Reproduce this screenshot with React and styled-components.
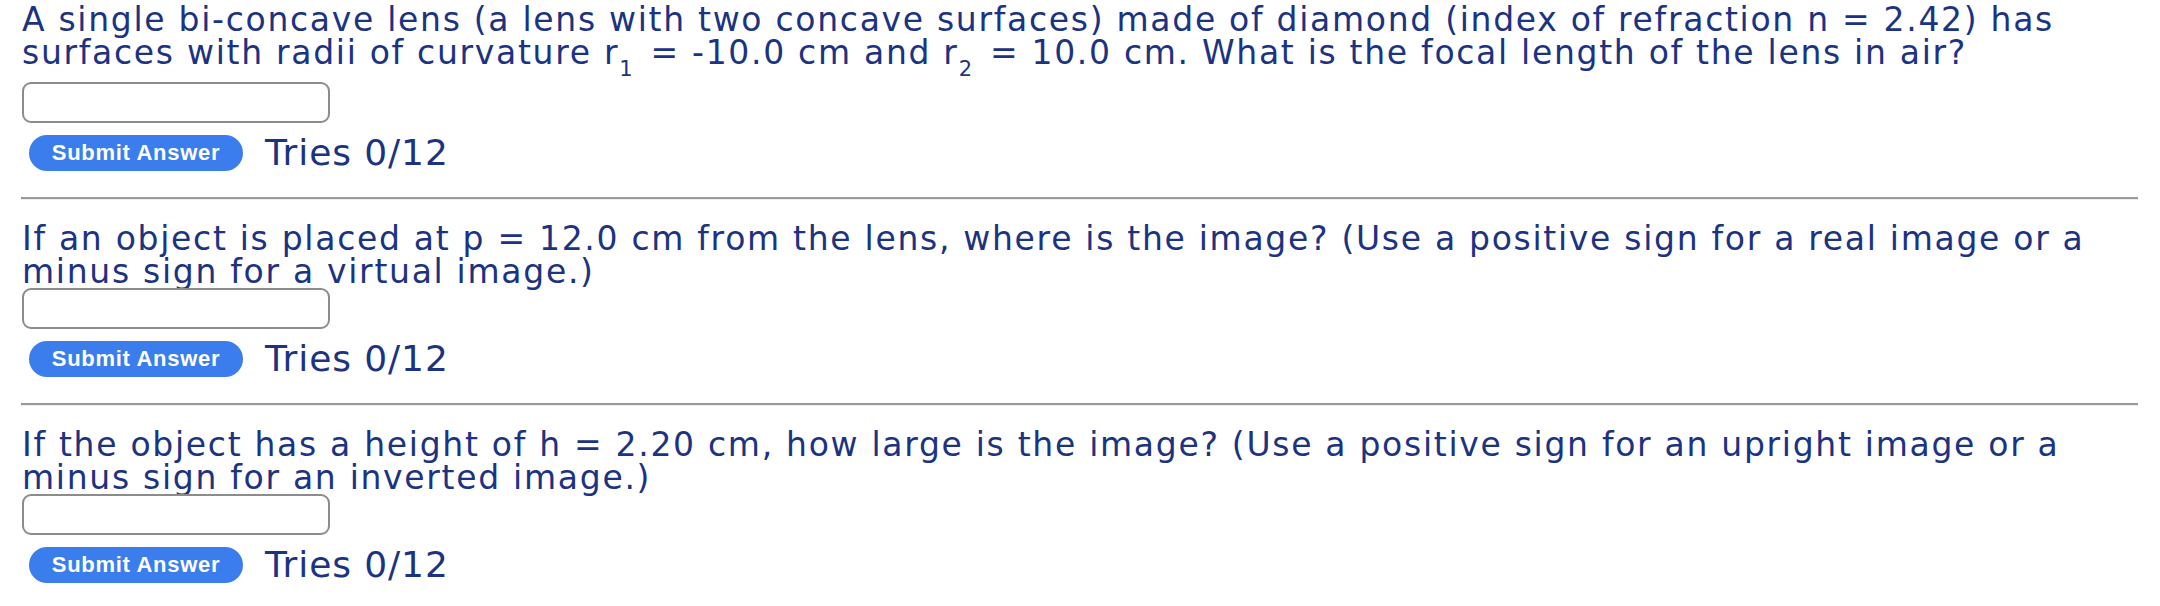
import React from "react";
import styled, { createGlobalStyle } from "styled-components";

const GlobalStyle = createGlobalStyle`
  html, body {
    margin: 0;
    padding: 0;
    background: #ffffff;
  }
`;

const questions = [
  {
    id: 1,
    text: (
      <>
        A single bi-concave lens (a lens with two concave surfaces) made of diamond (index of
        refraction n = 2.42) has surfaces with radii of curvature r<Sub>1</Sub> = -10.0 cm and
        r<Sub>2</Sub> = 10.0 cm. What is the focal length of the lens in air?
      </>
    ),
  },
  {
    id: 2,
    text: (
      <>
        If an object is placed at p = 12.0 cm from the lens, where is the image? (Use a positive
        sign for a real image or a minus sign for a virtual image.)
      </>
    ),
  },
  {
    id: 3,
    text: (
      <>
        If the object has a height of h = 2.20 cm, how large is the image? (Use a positive sign
        for an upright image or a minus sign for an inverted image.)
      </>
    ),
  },
];

export default function App() {
  return (
    <Page>
      <GlobalStyle />
      {questions.map((q, i) => (
        <React.Fragment key={q.id}>
          {i > 0 && <Divider />}
          <Section>
            <Question>{q.text}</Question>
            <AnswerInput type="text" />
            <ActionRow>
              <SubmitButton>Submit Answer</SubmitButton>
              <Tries>Tries 0/12</Tries>
            </ActionRow>
          </Section>
        </React.Fragment>
      ))}
    </Page>
  );
}

const Page = styled.div`
  padding: 3px 22px 0 22px;
  font-family: "DejaVu Sans", Verdana, sans-serif;
  color: #1b3382;
`;

const Section = styled.div`
  display: flex;
  flex-direction: column;
  align-items: flex-start;
`;

const Question = styled.p`
  margin: 0;
  font-size: 33px;
  line-height: 33px;
  letter-spacing: 1.7px;
`;

function Sub({ children }) {
  return <SubText>{children}</SubText>;
}

const SubText = styled.span`
  display: inline-block;
  margin: 0 4px 0 0;
  font-size: 21px;
  line-height: 25px;
  vertical-align: -12px;
`;

const AnswerInput = styled.input`
  box-sizing: border-box;
  width: 308px;
  height: 41px;
  margin: 0;
  border: 2px solid #8c8c8c;
  border-radius: 9px;
  background: #fff;
  font-size: 20px;
`;

const ActionRow = styled.div`
  display: flex;
  align-items: center;
  margin-top: 9px;
  padding-left: 7px;
  gap: 22px;
`;

const SubmitButton = styled.button`
  box-sizing: border-box;
  width: 214px;
  height: 36px;
  border: none;
  border-radius: 18px;
  background: #3b7ded;
  color: #ffffff;
  font-family: "Liberation Sans", Arial, sans-serif;
  font-weight: 700;
  font-size: 22px;
  letter-spacing: 0.7px;
  cursor: pointer;
`;

const Tries = styled.span`
  font-size: 36px;
  letter-spacing: 0.9px;
`;

const Divider = styled.hr`
  margin: 24px 0 22px -1px;
  border: none;
  border-top: 2px solid #9a9a9a;
  border-bottom: 1px solid #ececec;
  height: 0;
`;
